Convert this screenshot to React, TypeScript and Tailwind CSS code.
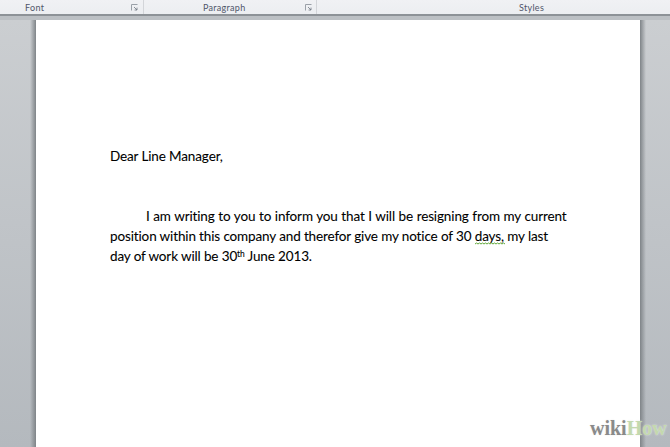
function Launcher() {
  return (
    <svg width="7" height="7" viewBox="0 0 7 7" className="shrink-0">
      <path d="M0.5 6.5V0.5H6.5" fill="none" stroke="#9aa0a8" />
      <path d="M3 3L6 6M6 3.6V6H3.6" fill="none" stroke="#6f7680" strokeWidth="0.8" />
    </svg>
  );
}

function Squiggle() {
  return (
    <svg width="31" height="3" viewBox="0 0 31 3" className="absolute left-0 bottom-[1px]">
      <path
        d="M0 2L1.5 1L3 2L4.5 1L6 2L7.5 1L9 2L10.5 1L12 2L13.5 1L15 2L16.5 1L18 2L19.5 1L21 2L22.5 1L24 2L25.5 1L27 2L28.5 1L30 2"
        fill="none"
        stroke="#5fa838"
        strokeWidth="1"
      />
    </svg>
  );
}

const labelClass = "text-[9px] tracking-[0.3px] text-[#50566a] leading-none";

export default function App() {
  return (
    <main className="w-[670px] h-[447px] overflow-hidden flex flex-col relative font-['Lato','Open_Sans',sans-serif] bg-[#c0c4c8]">
      {/* ribbon strip */}
      <div className="h-[14px] shrink-0 flex bg-gradient-to-b from-[#f0f1f4] to-[#eceef1]">
        <div className="w-[144px] flex items-center justify-between pl-[25px] pr-[5px] border-r border-[#d3d5d9]">
          <span className={labelClass}>Font</span>
          <Launcher />
        </div>
        <div className="w-[173px] flex items-center justify-between pl-[59px] pr-[4px] border-r border-[#d3d5d9]">
          <span className={labelClass}>Paragraph</span>
          <Launcher />
        </div>
        <div className="flex-1 flex items-center pl-[202px]">
          <span className={labelClass}>Styles</span>
        </div>
      </div>
      <div className="h-[2px] shrink-0 bg-[#8d9297]" />
      <div className="h-[4px] shrink-0 bg-[#bcc0c4]" />

      {/* document area */}
      <div className="flex-1 min-h-0 flex bg-gradient-to-b from-[#cbced1] to-[#b4b9be]">
        <div className="w-[36px] shrink-0 flex justify-end">
          <div className="w-[6px] h-full bg-gradient-to-r from-transparent to-[#7f8488]" />
        </div>
        <div className="flex-1 bg-white pt-[126px] pl-[74px] text-[13.5px] tracking-[-0.13px] leading-[20px] text-black whitespace-nowrap [-webkit-text-stroke:0.08px_#000]">
          <p>Dear Line Manager,</p>
          <p className="mt-[40px]">
            <span className="pl-[36px] [word-spacing:0.3px]">I am writing to you to inform you that I will be resigning from my current</span>
            <br />
            position within this company and therefor give my notice of 30{" "}
            <span className="relative inline-block">
              days,
              <Squiggle />
            </span>{" "}
            my last
            <br />
            day of work will be 30<sup className="text-[8.5px]">th</sup> June 2013.
          </p>
        </div>
        <div className="w-[30px] shrink-0 flex">
          <div className="w-[6px] h-full bg-gradient-to-l from-transparent to-[#7f8488]" />
        </div>
      </div>

      {/* watermark */}
      <div className="absolute left-[590px] top-[418px] text-[20px] font-bold leading-none font-['Liberation_Serif',serif] flex [text-shadow:0_0_2px_#e8e8e8]">
        <span className="text-[#8a8a8a]">wiki</span>
        <span className="text-[#c3d9ae]">How</span>
      </div>
    </main>
  );
}
